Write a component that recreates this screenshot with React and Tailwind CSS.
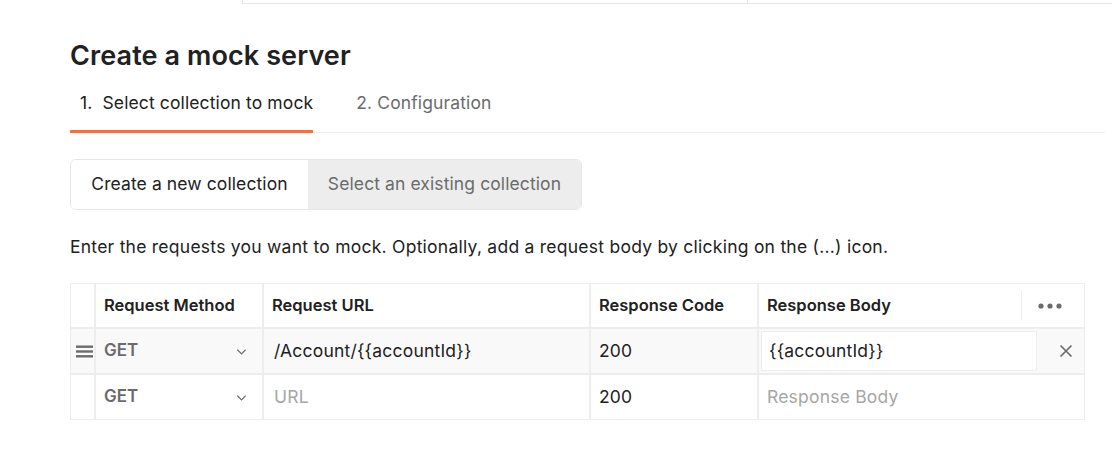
import React from 'react';

const font = { fontFamily: 'Inter, "Noto Sans", sans-serif' };

const Chevron = () => (
    <svg width="15" height="15" viewBox="0 0 16 16" fill="none" className="text-[#6b6b6b]">
        <path d="M3.5 6l4.5 4.5L12.5 6" stroke="currentColor" strokeWidth="1.4" />
    </svg>
);

const Hamburger = () => (
    <svg width="17" height="13" viewBox="0 0 17 13" className="text-[#6b6b6b]">
        <rect x="0" y="0.5" width="17" height="2.4" fill="currentColor" />
        <rect x="0" y="5.3" width="17" height="2.4" fill="currentColor" />
        <rect x="0" y="10.1" width="17" height="2.4" fill="currentColor" />
    </svg>
);

const Close = () => (
    <svg width="16" height="16" viewBox="0 0 16 16" fill="none" className="text-[#6b6b6b]">
        <path d="M2.5 2.5l11 11M13.5 2.5l-11 11" stroke="currentColor" strokeWidth="1.7" />
    </svg>
);

const Dots = () => (
    <svg width="24" height="6" viewBox="0 0 24 6" className="text-[#6b6b6b]">
        <circle cx="3" cy="3" r="2.6" fill="currentColor" />
        <circle cx="12" cy="3" r="2.6" fill="currentColor" />
        <circle cx="21" cy="3" r="2.6" fill="currentColor" />
    </svg>
);

const rows = [
    { method: 'GET', url: '/Account/{{accountId}}', code: '200', body: '{{accountId}}', active: true },
    { method: 'GET', url: '', code: '200', body: '', active: false },
];

export default function App() {
    return (
        <div className="w-[1112px] h-[469px] bg-white overflow-hidden text-[#212121]" style={font}>
            {/* leftover bit of the panel above */}
            <div className="ml-[242px] h-[4px] flex border-l border-b border-[#e6e6e6]">
                <div className="w-[505px] border-r border-[#e6e6e6]" />
            </div>

            <div className="pl-[70px] pr-[7px]">
                <h1 className="mt-[36px] text-[27px] leading-8 font-semibold tracking-[0.1px]">Create a mock server</h1>

                <div className="mt-[13px] flex border-b border-[#ededed]">
                    <div className="pl-[10px] pt-[6px] pb-[15px] border-b-[3px] border-[#ff6c37] text-[17.5px] leading-6 tracking-[0.12px] -mb-px">
                        1.&nbsp; Select collection to mock
                    </div>
                    <div className="ml-[43px] pt-[6px] pb-[15px] text-[17.5px] leading-6 tracking-[0.12px] text-[#6b6b6b]">
                        2. Configuration
                    </div>
                </div>

                <div className="mt-[26px] w-[512px] h-[51px] flex border border-[#e6e6e6] rounded-md overflow-hidden text-[17.5px] tracking-[0.1px]">
                    <div className="w-[237px] flex items-center justify-center bg-white">Create a new collection</div>
                    <div className="flex-1 flex items-center justify-center bg-[#ededed] text-[#6b6b6b]">
                        Select an existing collection
                    </div>
                </div>

                <p className="mt-[25px] text-[17.5px] leading-6 tracking-[0.25px]">
                    Enter the requests you want to mock. Optionally, add a request body by clicking on the (...) icon.
                </p>

                <div className="mt-[24px] w-[1015px] border border-[#ededed] text-[17.5px] tracking-[0.2px]">
                    {/* header */}
                    <div className="flex h-[43px] font-semibold text-[16.5px] tracking-normal text-[#212121]">
                        <div className="w-[23px]" />
                        <div className="w-[168px] border-l-2 border-[#ededed] flex items-center px-[8px]">Request Method</div>
                        <div className="w-[327px] border-l-2 border-[#ededed] flex items-center px-[8px]">Request URL</div>
                        <div className="w-[168px] border-l-2 border-[#ededed] flex items-center px-[8px]">Response Code</div>
                        <div className="w-[264px] border-l-2 border-[#ededed] flex items-center px-[8px]">Response Body</div>
                        <div className="flex-1 flex items-center py-[7px]">
                            <div className="h-full border-l border-[#ededed]" />
                            <div className="flex-1 flex items-center justify-center pr-[6px]">
                                <Dots />
                            </div>
                        </div>
                    </div>

                    {rows.map((row, i) => (
                        <div
                            key={i}
                            className={`flex h-[46px] border-t-2 border-[#ededed] ${row.active ? 'bg-[#f9f9f9]' : 'bg-white'}`}
                        >
                            <div className="w-[23px] flex items-center justify-center pl-[3px]">
                                {row.active && <Hamburger />}
                            </div>
                            <div className="w-[168px] border-l-2 border-[#ededed] flex items-center justify-between px-[8px] pr-[13px] font-semibold text-[#6b6b6b] text-[17px] tracking-normal">
                                <span>{row.method}</span>
                                <Chevron />
                            </div>
                            <div className="w-[327px] border-l-2 border-[#ededed] flex items-center px-[10px]">
                                {row.url ? row.url : <span className="text-[#a6a6a6]">URL</span>}
                            </div>
                            <div className="w-[168px] border-l-2 border-[#ededed] flex items-center px-[8px]">{row.code}</div>
                            {row.active ? (
                                <div className="flex-1 border-l-2 border-[#ededed] flex items-center pl-[2px] py-[2px]">
                                    <div className="w-[276px] h-full bg-white border border-[#ededed] flex items-center px-[7px]">
                                        {row.body}
                                    </div>
                                    <div className="flex-1 flex items-center justify-center pl-[10px]">
                                        <Close />
                                    </div>
                                </div>
                            ) : (
                                <div className="flex-1 border-l-2 border-[#ededed] flex items-center px-[8px] text-[#a6a6a6]">
                                    Response Body
                                </div>
                            )}
                        </div>
                    ))}
                </div>
            </div>
        </div>
    );
}
